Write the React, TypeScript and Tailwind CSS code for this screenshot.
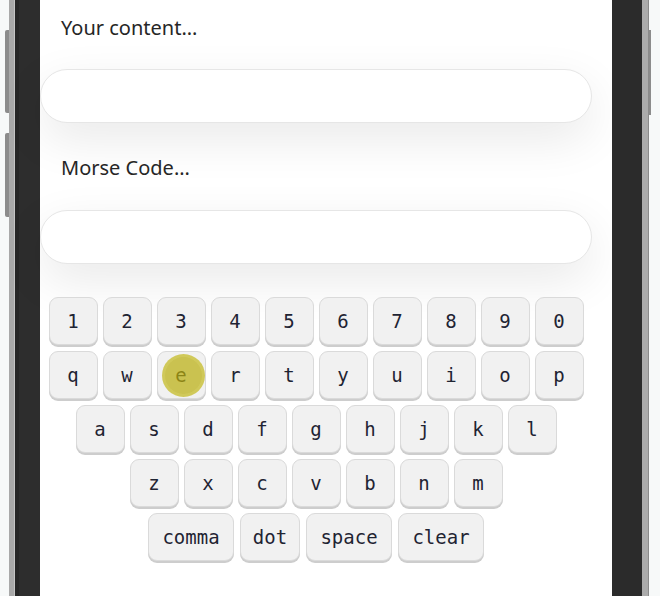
import React from "react";

const row1 = ["1", "2", "3", "4", "5", "6", "7", "8", "9", "0"];
const row2 = ["q", "w", "e", "r", "t", "y", "u", "i", "o", "p"];
const row3 = ["a", "s", "d", "f", "g", "h", "j", "k", "l"];
const row4 = ["z", "x", "c", "v", "b", "n", "m"];

const keyCls =
  "relative flex items-center justify-center h-[48px] rounded-[9px] border border-[#dadada] bg-[#f1f1f1] shadow-[0_2px_0_#cdcdcd] text-[19px] text-[#1f2433] [font-family:'DejaVu_Sans_Mono',monospace]";

function Key({ k, hl }: { k: string; hl?: boolean }) {
  return (
    <div className={keyCls + " w-[49px]"}>
      <span>{k}</span>
      {hl && (
        <div className="absolute left-[4px] top-[2px] w-[43px] h-[43px] rounded-full bg-[rgba(185,174,11,0.7)] border-[3px] border-[rgba(215,208,100,0.55)]" />
      )}
    </div>
  );
}

function Row({ keys }: { keys: string[] }) {
  return (
    <div className="flex justify-center gap-[5px]">
      {keys.map((k) => (
        <Key key={k} k={k} hl={k === "e"} />
      ))}
    </div>
  );
}

export default function App() {
  return (
    <div className="w-[660px] h-[596px] overflow-hidden flex bg-[#f7f9f9]">
      {/* left frame */}
      <div className="w-[5px] shrink-0" />
      <div className="w-[4px] shrink-0 flex flex-col">
        <div className="mt-[30px] h-[83px] bg-[#8c8c8c] rounded-l-[2px]" />
        <div className="mt-[20px] h-[84px] bg-[#8c8c8c] rounded-l-[2px]" />
      </div>
      <div className="w-[6px] shrink-0 bg-[#a9a9a9] border-r border-[#c4c4c4]" />
      <div className="w-[25px] shrink-0 bg-[#2d2d2d] border-l-[4px] border-[#262626]" />
      {/* screen */}
      <div className="w-[572px] shrink-0 bg-white pr-[20px]">
        <div className="pt-[7px] [font-family:'Noto_Sans',sans-serif] text-[#262626]">
          <div className="h-[42px] leading-[42px] pl-[21px] text-[20px] mb-[20px]">Your content...</div>
          <div className="h-[54px] rounded-full border border-[#e6e6e6] bg-white shadow-[0_16px_48px_rgba(0,0,0,0.09)]" />
          <div className="mt-[24px] h-[42px] leading-[42px] pl-[21px] text-[20px] mb-[21px]">Morse Code...</div>
          <div className="h-[54px] rounded-full border border-[#e6e6e6] bg-white shadow-[0_16px_48px_rgba(0,0,0,0.09)]" />
        </div>
        <div className="mt-[33px] flex flex-col gap-[6px]">
          <Row keys={row1} />
          <Row keys={row2} />
          <Row keys={row3} />
          <Row keys={row4} />
          <div className="flex justify-center gap-[6px]">
            <div className={keyCls + " w-[86px]"}>comma</div>
            <div className={keyCls + " w-[60px]"}>dot</div>
            <div className={keyCls + " w-[86px]"}>space</div>
            <div className={keyCls + " w-[86px]"}>clear</div>
          </div>
        </div>
      </div>
      {/* right frame */}
      <div className="w-[30px] shrink-0 bg-[#2b2b2b]" />
      <div className="w-[6px] shrink-0 bg-[#ababab]" />
      <div className="w-[1px] shrink-0 bg-[#8a8a8a]" />
      <div className="w-[2px] shrink-0 flex flex-col">
        <div className="mt-[30px] h-[85px] bg-[#8c8c8c]" />
      </div>
    </div>
  );
}
